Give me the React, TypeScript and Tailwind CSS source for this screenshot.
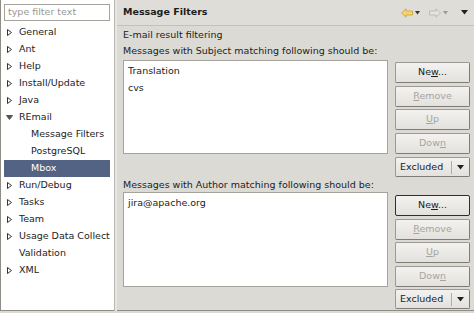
import React from 'react';

const tree: { label: string; level: number; arrow?: 'right' | 'down'; selected?: boolean }[] = [
  { label: 'General', level: 0, arrow: 'right' },
  { label: 'Ant', level: 0, arrow: 'right' },
  { label: 'Help', level: 0, arrow: 'right' },
  { label: 'Install/Update', level: 0, arrow: 'right' },
  { label: 'Java', level: 0, arrow: 'right' },
  { label: 'REmail', level: 0, arrow: 'down' },
  { label: 'Message Filters', level: 1 },
  { label: 'PostgreSQL', level: 1 },
  { label: 'Mbox', level: 1, selected: true },
  { label: 'Run/Debug', level: 0, arrow: 'right' },
  { label: 'Tasks', level: 0, arrow: 'right' },
  { label: 'Team', level: 0, arrow: 'right' },
  { label: 'Usage Data Collect', level: 0, arrow: 'right' },
  { label: 'Validation', level: 0 },
  { label: 'XML', level: 0, arrow: 'right' },
];

function Arrow({ dir }: { dir: 'right' | 'down' }) {
  return (
    <svg width="7" height="7" viewBox="0 0 7 7" className="shrink-0">
      {dir === 'right' ? (
        <path d="M1.5 0.5 L5.5 3.5 L1.5 6.5 Z" fill="#fff" stroke="#333" strokeWidth="1" />
      ) : (
        <path d="M0.5 1.5 L6.5 1.5 L3.5 5.5 Z" fill="#555" stroke="#555" strokeWidth="1" />
      )}
    </svg>
  );
}

function Btn({ label, u, disabled, focused }: { label: string; u: number; disabled?: boolean; focused?: boolean }) {
  return (
    <div
      className={`h-[21px] flex items-center justify-center rounded-[2px] border ${
        focused ? 'border-[#2e2e2e]' : 'border-[#9d9a93] border-b-[#7f7c76] border-r-[#7f7c76]'
      } bg-gradient-to-b from-[#f3f2f0] to-[#e3e1dd] ${disabled ? 'text-[#a7a49d]' : 'text-[#1c1c1c]'}`}
    >
      <span>
        {label.slice(0, u)}
        <span className="underline">{label[u]}</span>
        {label.slice(u + 1)}
      </span>
    </div>
  );
}

function Combo() {
  return (
    <div className="h-[20px] flex items-center rounded-[2px] border border-[#9d9a93] border-b-[#7f7c76] border-r-[#7f7c76] bg-gradient-to-b from-[#f3f2f0] to-[#e3e1dd] text-[#1c1c1c]">
      <span className="flex-1 pl-[4px]">Excluded</span>
      <span className="w-px h-[13px] bg-[#b0ada6]" />
      <span className="w-[17px] flex justify-center">
        <svg width="7" height="5" viewBox="0 0 7 5">
          <path d="M0 0 L7 0 L3.5 4.5 Z" fill="#222" />
        </svg>
      </span>
    </div>
  );
}

function Buttons({ focusNew }: { focusNew?: boolean }) {
  return (
    <div className="flex flex-col gap-[2.5px] pt-[2px]">
      <Btn label="New..." u={2} focused={focusNew} />
      <Btn label="Remove" u={0} disabled />
      <Btn label="Up" u={0} disabled />
      <Btn label="Down" u={3} disabled />
    </div>
  );
}

function List({ items, h }: { items: string[]; h: string }) {
  return (
    <div className={`${h} bg-white border border-[#a6a39c] pt-[1px] pl-[4px]`}>
      {items.map((t) => (
        <div key={t} className="h-[17px] leading-[17px]">{t}</div>
      ))}
    </div>
  );
}

export default function App() {
  return (
    <div
      className="w-[474px] h-[313px] overflow-hidden flex bg-[#dcdad5] text-[#1c1c1c] text-[9.5px]"
      style={{ fontFamily: '"DejaVu Sans", sans-serif' }}
    >
      {/* LEFT TREE */}
      <div className="w-[114px] h-[311px] bg-white border-l border-b border-[#8f8c86] flex flex-col">
        <div className="ml-[3px] mr-[4px] mt-[4px] h-[17px] border border-[#a6a39c] flex items-center pl-[3px] text-[#9a9893]">
          type filter text
        </div>
        <div className="flex flex-col mt-[3px] pl-[3px] pr-[4px]">
          {tree.map((n) => (
            <div
              key={n.label}
              className={`h-[17px] flex items-center whitespace-nowrap ${
                n.selected ? 'bg-[#526383] text-white' : ''
              }`}
            >
              <span className="w-[15px] flex justify-start pl-[2px]">
                {n.arrow ? <Arrow dir={n.arrow} /> : null}
              </span>
              <span className={n.level === 1 ? 'pl-[12px]' : ''}>{n.label}</span>
            </div>
          ))}
        </div>
      </div>

      {/* SASH */}
      <div className="w-[3px] h-[311px] bg-[#e8e6e2] border-l border-[#b9b6b0]" />

      {/* RIGHT PAGE */}
      <div className="flex-1 flex flex-col h-[311px] border-b border-[#8f8c86]">
        <div className="h-[26px] flex items-center border-b border-[#c4c1ba] bg-[#dfddd8] pl-[6px] pr-[6px]">
          <span className="font-bold flex-1">Message Filters</span>
          <div className="flex items-center gap-[2px]">
            <svg width="12" height="10" viewBox="0 0 12 10">
              <path d="M0.5 5 L5 0.8 L5 3 L11.5 3 L11.5 7 L5 7 L5 9.2 Z" fill="#f5d56b" stroke="#c9a233" strokeWidth="0.8" />
            </svg>
            <svg width="5" height="4" viewBox="0 0 5 4"><path d="M0 0 L5 0 L2.5 3.5 Z" fill="#333" /></svg>
            <svg width="12" height="10" viewBox="0 0 12 10" className="ml-[7px]">
              <path d="M11.5 5 L7 0.8 L7 3 L0.5 3 L0.5 7 L7 7 L7 9.2 Z" fill="#e6e3dd" stroke="#b6b3ac" strokeWidth="0.8" />
            </svg>
            <svg width="5" height="4" viewBox="0 0 5 4"><path d="M0 0 L5 0 L2.5 3.5 Z" fill="#999" /></svg>
            <svg width="7" height="5" viewBox="0 0 7 5" className="ml-[11px]"><path d="M0 0 L7 0 L3.5 4.5 Z" fill="#222" /></svg>
          </div>
        </div>

        <div className="grid grid-cols-[1fr_75px] gap-x-[7px] pl-[6px] pr-[4px]">
          <div className="col-span-2 h-[16px] leading-[16px] mt-[1px]">E-mail result filtering</div>
          <div className="col-span-2 h-[16px] leading-[16px]">Messages with Subject matching following should be:</div>

          <div className="mt-[1px]">
            <List items={['Translation', 'cvs']} h="h-[94px]" />
          </div>
          <div className="mt-[1px]">
            <Buttons />
          </div>
          <div />
          <div className="mt-[3px]">
            <Combo />
          </div>

          <div className="col-span-2 h-[15px] leading-[15px]">Messages with Author matching following should be:</div>

          <div>
            <List items={['jira@apache.org']} h="h-[95px]" />
          </div>
          <div className="pt-[1px]">
            <Buttons focusNew />
          </div>
          <div />
          <div className="mt-[2px]">
            <Combo />
          </div>
        </div>
      </div>
    </div>
  );
}
